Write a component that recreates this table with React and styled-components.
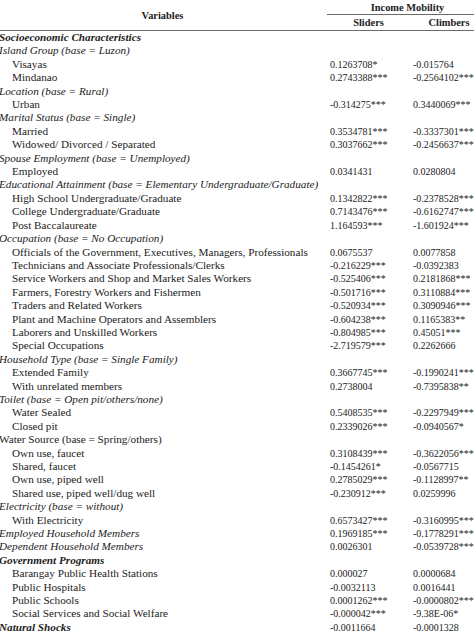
import React from "react";
import styled, { createGlobalStyle } from "styled-components";

const GlobalStyle = createGlobalStyle`
  html, body {
    margin: 0;
    padding: 0;
    background: #ffffff;
    overflow: hidden;
  }
  body {
    font-family: "Liberation Serif", "Times New Roman", serif;
    color: #222222;
  }
`;

const rows = [
  { label: "Socioeconomic Characteristics", kind: "section" },
  { label: "Island Group (base = Luzon)", kind: "group" },
  { label: "Visayas", kind: "item", s: "0.1263708*", c: "-0.015764" },
  { label: "Mindanao", kind: "item", s: "0.2743388***", c: "-0.2564102***" },
  { label: "Location (base = Rural)", kind: "group" },
  { label: "Urban", kind: "item", s: "-0.314275***", c: "0.3440069***" },
  { label: "Marital Status (base = Single)", kind: "group" },
  { label: "Married", kind: "item", s: "0.3534781***", c: "-0.3337301***" },
  { label: "Widowed/ Divorced / Separated", kind: "item", s: "0.3037662***", c: "-0.2456637***" },
  { label: "Spouse Employment (base = Unemployed)", kind: "group" },
  { label: "Employed", kind: "item", s: "0.0341431", c: "0.0280804" },
  { label: "Educational Attainment (base = Elementary Undergraduate/Graduate)", kind: "group" },
  { label: "High School Undergraduate/Graduate", kind: "item", s: "0.1342822***", c: "-0.2378528***" },
  { label: "College Undergraduate/Graduate", kind: "item", s: "0.7143476***", c: "-0.6162747***" },
  { label: "Post Baccalaureate", kind: "item", s: "1.164593***", c: "-1.601924***" },
  { label: "Occupation (base = No Occupation)", kind: "group" },
  { label: "Officials of the Government, Executives, Managers, Professionals", kind: "item", s: "0.0675537", c: "0.0077858" },
  { label: "Technicians and Associate Professionals/Clerks", kind: "item", s: "-0.216229***", c: "-0.0392383" },
  { label: "Service Workers and Shop and Market Sales Workers", kind: "item", s: "-0.525406***", c: "0.2181868***" },
  { label: "Farmers, Forestry Workers and Fishermen", kind: "item", s: "-0.501716***", c: "0.3110884***" },
  { label: "Traders and Related Workers", kind: "item", s: "-0.520934***", c: "0.3090946***" },
  { label: "Plant and Machine Operators and Assemblers", kind: "item", s: "-0.604238***", c: "0.1165383**" },
  { label: "Laborers and Unskilled Workers", kind: "item", s: "-0.804985***", c: "0.45051***" },
  { label: "Special Occupations", kind: "item", s: "-2.719579***", c: "0.2262666" },
  { label: "Household Type (base = Single Family)", kind: "group" },
  { label: "Extended Family", kind: "item", s: "0.3667745***", c: "-0.1990241***" },
  { label: "With unrelated members", kind: "item", s: "0.2738004", c: "-0.7395838**" },
  { label: "Toilet (base = Open pit/others/none)", kind: "group" },
  { label: "Water Sealed", kind: "item", s: "0.5408535***", c: "-0.2297949***" },
  { label: "Closed pit", kind: "item", s: "0.2339026***", c: "-0.0940567*" },
  { label: "Water Source (base = Spring/others)", kind: "plain" },
  { label: "Own use, faucet", kind: "item", s: "0.3108439***", c: "-0.3622056***" },
  { label: "Shared, faucet", kind: "item", s: "-0.1454261*", c: "-0.0567715" },
  { label: "Own use, piped well", kind: "item", s: "0.2785029***", c: "-0.1128997**" },
  { label: "Shared use, piped well/dug well", kind: "item", s: "-0.230912***", c: "0.0259996" },
  { label: "Electricity (base = without)", kind: "group" },
  { label: "With Electricity", kind: "item", s: "0.6573427***", c: "-0.3160995***" },
  { label: "Employed Household Members", kind: "group", s: "0.1969185***", c: "-0.1778291***" },
  { label: "Dependent Household Members", kind: "group", s: "0.0026301", c: "-0.0539728***" },
  { label: "Government Programs", kind: "section" },
  { label: "Barangay Public Health Stations", kind: "item", s: "0.000027", c: "0.0000684" },
  { label: "Public Hospitals", kind: "item", s: "-0.0032113", c: "0.0016441" },
  { label: "Public Schools", kind: "item", s: "0.0001262***", c: "-0.0000802***" },
  { label: "Social Services and Social Welfare", kind: "item", s: "-0.000042***", c: "-9.38E-06*" },
  { label: "Natural Shocks", kind: "section", s: "-0.0011664", c: "-0.0001328" },
];

function App() {
  return (
    <>
      <GlobalStyle />
      <Sheet>
        <Table>
          <colgroup>
            <col style={{ width: 329 }} />
            <col style={{ width: 83 }} />
            <col style={{ width: 78 }} />
          </colgroup>
          <thead>
            <tr>
              <HeadCell rowSpan={2}>Variables</HeadCell>
              <SpanCell colSpan={2}>Income Mobility</SpanCell>
            </tr>
            <tr>
              <SubHeadCell>Sliders</SubHeadCell>
              <SubHeadCell>Climbers</SubHeadCell>
            </tr>
          </thead>
          <tbody>
            {rows.map((row) => (
              <Row key={row.label}>
                <LabelCell $kind={row.kind}>{row.label}</LabelCell>
                <ValueCell>{row.s}</ValueCell>
                <ValueCell>{row.c}</ValueCell>
              </Row>
            ))}
          </tbody>
        </Table>
      </Sheet>
    </>
  );
}

const Sheet = styled.div`
  width: 474px;
  height: 635px;
  overflow: hidden;
`;

const Table = styled.table`
  margin-left: -2px;
  width: 490px;
  table-layout: fixed;
  border-collapse: collapse;
  font-size: 11.2px;

  thead {
    border-bottom: 1px solid #6a6a6a;
  }
`;

const HeadCell = styled.th`
  height: 30px;
  padding: 0;
  font-size: 10.4px;
  font-weight: bold;
  text-align: center;
  vertical-align: middle;
`;

const SpanCell = styled.th`
  height: 14px;
  padding: 0;
  font-size: 10.4px;
  font-weight: bold;
  text-align: center;
  vertical-align: middle;
  border-bottom: 1px solid #6a6a6a;
`;

const SubHeadCell = styled.th`
  height: 15px;
  padding: 0;
  font-size: 10.4px;
  font-weight: bold;
  text-align: center;
  vertical-align: middle;
`;

const Row = styled.tr`
  height: 13.4px;
`;

const LabelCell = styled.td`
  padding: 0 0 0 ${(p) => (p.$kind === "item" ? "14px" : "1px")};
  line-height: 13.4px;
  white-space: nowrap;
  font-style: ${(p) =>
    p.$kind === "section" || p.$kind === "group" ? "italic" : "normal"};
  font-weight: ${(p) => (p.$kind === "section" ? "bold" : "normal")};
`;

const ValueCell = styled.td`
  padding: 0 0 0 3px;
  font-size: 10px;
  line-height: 13.4px;
  white-space: nowrap;
`;

export default App;
